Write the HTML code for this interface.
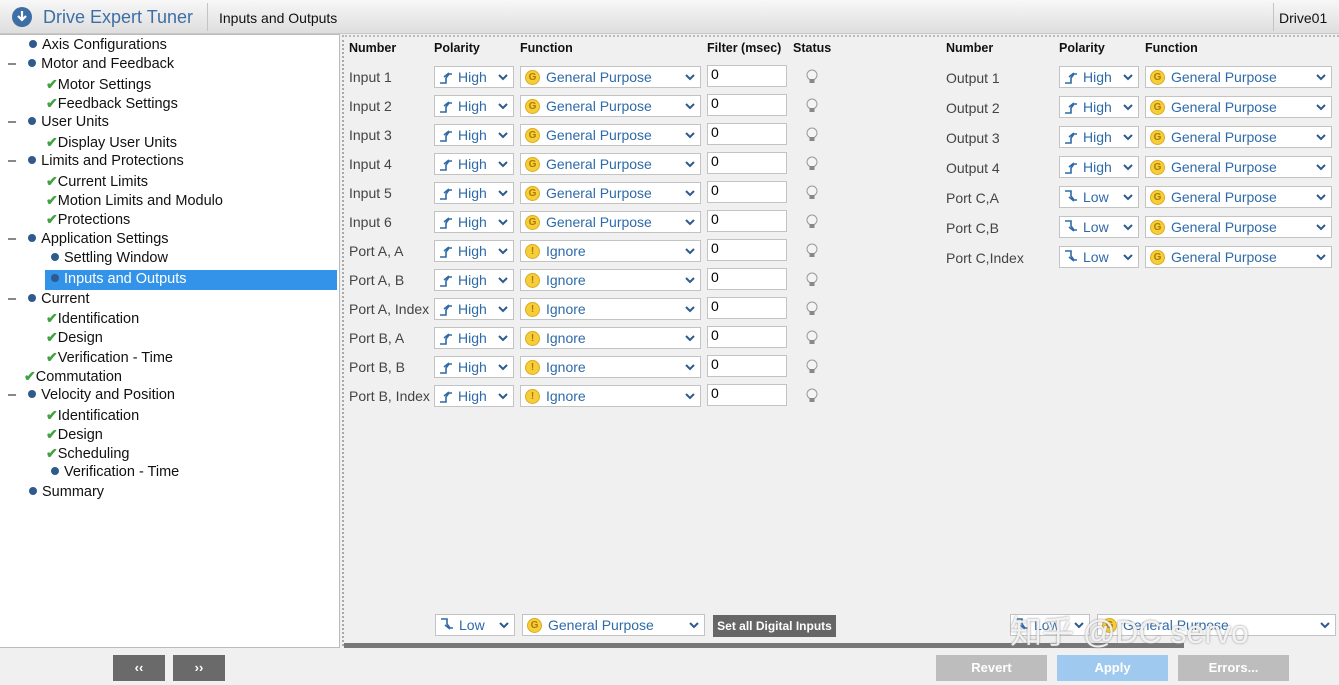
<!DOCTYPE html>
<html><head><meta charset="utf-8"><style>
*{box-sizing:border-box;margin:0;padding:0}
body{width:1339px;height:685px;overflow:hidden;background:#f0f0f0;font-family:"Liberation Sans",Arial,sans-serif;position:relative}
.a{position:absolute;white-space:nowrap}
#hdr{left:0;top:0;width:1339px;height:34px;background:linear-gradient(#f7f7f7,#dedede);border-bottom:1px solid #c8c8c8}
#left{left:0;top:34px;width:340px;height:614px;background:#fff;border:1px solid #bbb;border-left:none}
#main{left:342px;top:35px;width:997px;height:611px;border-left:2px dotted #aaa;border-top:2px dotted #bbb}
.t{font-size:14.5px;color:#111;line-height:17px;height:17px}
.dot{display:inline-block;width:8px;height:8px;border-radius:50%;background:#2e5a8c;margin-right:5px;vertical-align:1px}
.chk{color:#3fa33f;font-weight:bold;font-size:14px;line-height:17px}
.h{font-size:12.5px;font-weight:bold;color:#111}
.lb{font-size:14px;color:#444}
.sel{height:22px;background:#fff;border:1px solid #c3c3c3;font-size:14px;color:#2e6aa8;display:flex;align-items:center}
.sel .ar{position:absolute;right:5px;top:5px;width:10px;height:10px}
.in{height:22px;background:#fff;border:1px solid #c3c3c3;font-size:14px;padding-left:3px;line-height:17px}
.g{display:inline-block;width:15px;height:15px;border-radius:50%;background:#f5cf3a;border:1px solid #e0a820;color:#b07a00;font-size:10px;font-weight:bold;text-align:center;line-height:13px;margin:0 6px 0 4px;flex:none}
.btn{height:26px;font-size:13px;font-weight:bold;color:#fff;text-align:center;line-height:26px}
</style></head><body>
<div id="hdr" class="a">
<svg class="a" style="left:12px;top:7px" width="20" height="20"><circle cx="10" cy="10" r="10" fill="#3d6fa6"/><path d="M10 4v8M6 9l4 4 4-4" stroke="#fff" stroke-width="2.2" fill="none"/></svg>
<div class="a" style="left:43px;top:7px;font-size:18px;color:#3d6fa6">Drive Expert Tuner</div>
<div class="a" style="left:207px;top:3px;width:1px;height:28px;background:#c4c4c4"></div>
<div class="a" style="left:219px;top:10px;font-size:14px;color:#111">Inputs and Outputs</div>
<div class="a" style="left:1273px;top:3px;width:1px;height:28px;background:#c4c4c4"></div>
<div class="a" style="left:1279px;top:10px;font-size:14px;color:#111">Drive01</div>
</div>
<div id="left" class="a"></div>
<div class="a" style="left:45px;top:270px;width:292px;height:20px;background:#3393e8"></div>
<div id="tree">
<div class="a t" style="left:29px;top:37px"><span class="dot"></span>Axis Configurations</div>
<div class="a t" style="left:8px;top:56px">–&nbsp;&nbsp;&nbsp;<span class="dot"></span>Motor and Feedback</div>
<div class="a t" style="left:46px;top:76px"><span class="chk">✔</span>Motor Settings</div>
<div class="a t" style="left:46px;top:95px"><span class="chk">✔</span>Feedback Settings</div>
<div class="a t" style="left:8px;top:114px">–&nbsp;&nbsp;&nbsp;<span class="dot"></span>User Units</div>
<div class="a t" style="left:46px;top:134px"><span class="chk">✔</span>Display User Units</div>
<div class="a t" style="left:8px;top:153px">–&nbsp;&nbsp;&nbsp;<span class="dot"></span>Limits and Protections</div>
<div class="a t" style="left:46px;top:173px"><span class="chk">✔</span>Current Limits</div>
<div class="a t" style="left:46px;top:192px"><span class="chk">✔</span>Motion Limits and Modulo</div>
<div class="a t" style="left:46px;top:211px"><span class="chk">✔</span>Protections</div>
<div class="a t" style="left:8px;top:231px">–&nbsp;&nbsp;&nbsp;<span class="dot"></span>Application Settings</div>
<div class="a t" style="left:51px;top:250px"><span class="dot"></span>Settling Window</div>
<div class="a t" style="left:51px;top:271px;color:#fff"><span class="dot"></span>Inputs and Outputs</div>
<div class="a t" style="left:8px;top:291px">–&nbsp;&nbsp;&nbsp;<span class="dot"></span>Current</div>
<div class="a t" style="left:46px;top:310px"><span class="chk">✔</span>Identification</div>
<div class="a t" style="left:46px;top:329px"><span class="chk">✔</span>Design</div>
<div class="a t" style="left:46px;top:349px"><span class="chk">✔</span>Verification - Time</div>
<div class="a t" style="left:24px;top:368px"><span class="chk">✔</span>Commutation</div>
<div class="a t" style="left:8px;top:387px">–&nbsp;&nbsp;&nbsp;<span class="dot"></span>Velocity and Position</div>
<div class="a t" style="left:46px;top:407px"><span class="chk">✔</span>Identification</div>
<div class="a t" style="left:46px;top:426px"><span class="chk">✔</span>Design</div>
<div class="a t" style="left:46px;top:445px"><span class="chk">✔</span>Scheduling</div>
<div class="a t" style="left:51px;top:464px"><span class="dot"></span>Verification - Time</div>
<div class="a t" style="left:29px;top:484px"><span class="dot"></span>Summary</div>
</div>
<div id="main" class="a"></div>
<div class="a h" style="left:349px;top:41px">Number</div>
<div class="a h" style="left:434px;top:41px">Polarity</div>
<div class="a h" style="left:520px;top:41px">Function</div>
<div class="a h" style="left:707px;top:41px">Filter (msec)</div>
<div class="a h" style="left:793px;top:41px">Status</div>
<div class="a h" style="left:946px;top:41px">Number</div>
<div class="a h" style="left:1059px;top:41px">Polarity</div>
<div class="a h" style="left:1145px;top:41px">Function</div>
<div id="rows"></div>
<div class="a" style="left:344px;top:643px;width:840px;height:5px;background:#777"></div>
<div class="a btn" style="left:713px;top:615px;width:123px;height:22px;line-height:22px;background:#666;font-size:12px">Set all Digital Inputs</div>
<div class="a btn" style="left:113px;top:655px;width:52px;background:#6a6a6a">‹‹</div>
<div class="a btn" style="left:173px;top:655px;width:52px;background:#6a6a6a">››</div>
<div class="a btn" style="left:936px;top:655px;width:111px;background:#bdbdbd">Revert</div>
<div class="a btn" style="left:1057px;top:655px;width:111px;background:#9fc9ee">Apply</div>
<div class="a btn" style="left:1178px;top:655px;width:111px;background:#bdbdbd">Errors...</div>
<div class="a" style="left:1010px;top:607px;font-size:32px;color:rgba(255,255,255,0.85);font-family:'Liberation Sans','Noto Sans CJK SC',sans-serif;text-shadow:0 0 2px #888">知乎 @DC servo</div>
<script>
var up='<svg width="16" height="16" style="margin:0 4px 0 3px;flex:none"><path d="M2 14h6V9l3-4h3M6 8l5-4" stroke="#2e6aa8" stroke-width="1.6" fill="none"/></svg>';
var dn='<svg width="16" height="16" style="margin:0 4px 0 3px;flex:none"><path d="M2 2h6v5l3 4h3M6 8l5 4" stroke="#2e6aa8" stroke-width="1.6" fill="none"/></svg>';
var ar='<svg class="ar" viewBox="0 0 10 10"><path d="M1 3l4 4 4-4" stroke="#2e5a8c" stroke-width="2" fill="none"/></svg>';
var bulb='<svg width="12" height="16"><circle cx="6" cy="6" r="5" fill="#f4f4f4" stroke="#999"/><rect x="3.5" y="10" width="5" height="4" fill="#888"/></svg>';
var h='';
var ins=['Input 1','Input 2','Input 3','Input 4','Input 5','Input 6','Port A, A','Port A, B','Port A, Index','Port B, A','Port B, B','Port B, Index'];
function sel(x,y,w,html){return '<div class="a sel" style="left:'+x+'px;top:'+y+'px;width:'+w+'px">'+html+ar+'</div>';}
function pol(x,y,hi){return sel(x,y,80,(hi?up+'High':dn+'Low'));}
function fn(x,y,w,gp){return sel(x,y,w,gp?'<span class="g">G</span>General Purpose':'<span class="g" style="color:#c07000">!</span>Ignore');}
ins.forEach(function(n,i){var y=66+i*29;
h+='<div class="a lb" style="left:349px;top:'+(y+3)+'px">'+n+'</div>';
h+=pol(434,y,1)+fn(520,y,181,i<6);
h+='<div class="a in" style="left:707px;top:'+(y-1)+'px;width:80px">0</div>';
h+='<div class="a" style="left:806px;top:'+(y+3)+'px">'+bulb+'</div>';});
var outs=['Output 1','Output 2','Output 3','Output 4','Port C,A','Port C,B','Port C,Index'];
outs.forEach(function(n,i){var y=66+i*30;
h+='<div class="a lb" style="left:946px;top:'+(y+4)+'px">'+n+'</div>';
h+=pol(1059,y,i<4)+fn(1145,y,187,1);});
h+=pol(435,614,0)+fn(522,614,183,1);
h+=pol(1010,614,0)+fn(1097,614,239,1);
document.getElementById('rows').innerHTML=h;
</script>
</body></html>
